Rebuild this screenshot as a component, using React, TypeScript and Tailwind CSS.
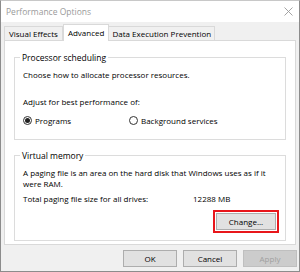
import React from 'react';

const font = "font-['Open_Sans','Noto_Sans',sans-serif]";

function Radio({ checked, label }: { checked?: boolean; label: string }) {
  return (
    <label className="flex items-center gap-[3px]">
      <span className="w-[9px] h-[9px] rounded-full border border-[#333] bg-white flex items-center justify-center">
        {checked && <span className="w-[5px] h-[5px] rounded-full bg-[#222]" />}
      </span>
      <span>{label}</span>
    </label>
  );
}

function Button({ label, disabled, className = '' }: { label: string; disabled?: boolean; className?: string }) {
  return (
    <button
      disabled={disabled}
      className={
        disabled
          ? `h-[17px] border border-[#bfbfbf] bg-[#cccccc] text-[#a0a0a0] ${className}`
          : `h-[17px] border border-[#adadad] bg-[#e1e1e1] text-black ${className}`
      }
    >
      {label}
    </button>
  );
}

export default function App() {
  return (
    <div
      className={`w-[300px] h-[272px] flex flex-col bg-[#f0f0f0] border border-[#8c8c8c] border-t-[#c8c8c8] text-[8px] leading-[11px] text-black ${font}`}
    >
      {/* title bar */}
      <div className="h-[21px] bg-white flex items-center justify-between pl-[5px] pr-[4px]">
        <span className="text-[#9a9a9a] text-[8.5px]">Performance Options</span>
        <svg width="9" height="9" viewBox="0 0 9 9" className="mr-[2px]">
          <path d="M0.5 0.5 L8.5 8.5 M8.5 0.5 L0.5 8.5" stroke="#9a9a9a" strokeWidth="0.9" />
        </svg>
      </div>

      {/* tabs */}
      <div className="flex items-end h-[18px] pl-[3px] relative z-10">
        <div className="h-[14px] px-[4px] flex items-center border border-b-0 border-[#d9d9d9] bg-[#f0f0f0]">
          Visual Effects
        </div>
        <div className="h-[17px] px-[4px] flex items-center border border-b-0 border-[#d9d9d9] bg-white -mb-px pb-px">
          Advanced
        </div>
        <div className="h-[14px] px-[3px] flex items-center border border-b-0 border-l-0 border-[#d9d9d9] bg-[#f0f0f0]">
          Data Execution Prevention
        </div>
      </div>

      {/* panel */}
      <div className="mx-[3px] h-[205px] bg-white border border-[#d9d9d9] px-[9px] pt-[11px] flex flex-col gap-[10px]">
        <fieldset className="border border-[#dcdcdc] h-[88px] px-[8px]">
          <legend className="px-[2px] -ml-[3px] text-[8.5px]">Processor scheduling</legend>
          <p className="mt-[6px]">Choose how to allocate processor resources.</p>
          <p className="mt-[16px]">Adjust for best performance of:</p>
          <div className="flex mt-[8px]">
            <div className="w-[106px]">
              <Radio checked label="Programs" />
            </div>
            <Radio label="Background services" />
          </div>
        </fieldset>

        <fieldset className="border border-[#dcdcdc] h-[91px] px-[8px]">
          <legend className="px-[2px] -ml-[3px] text-[8.5px]">Virtual memory</legend>
          <p className="mt-[6px]">
            A paging file is an area on the hard disk that Windows uses as if it
            <br />
            were RAM.
          </p>
          <div className="flex mt-[4px]">
            <span className="w-[170px]">Total paging file size for all drives:</span>
            <span>12288 MB</span>
          </div>
          <div className="flex justify-end mt-[6px] -mr-[2px]">
            <div className="border-2 border-[#e8161b] p-[1px]">
              <Button label="Change..." className="w-[60px] h-[15px]" />
            </div>
          </div>
        </fieldset>
      </div>

      {/* bottom buttons */}
      <div className="flex justify-end gap-[6px] pt-[5px] pr-[2px]">
        <Button label="OK" className="w-[54px]" />
        <Button label="Cancel" className="w-[54px]" />
        <Button label="Apply" disabled className="w-[54px]" />
      </div>
    </div>
  );
}
